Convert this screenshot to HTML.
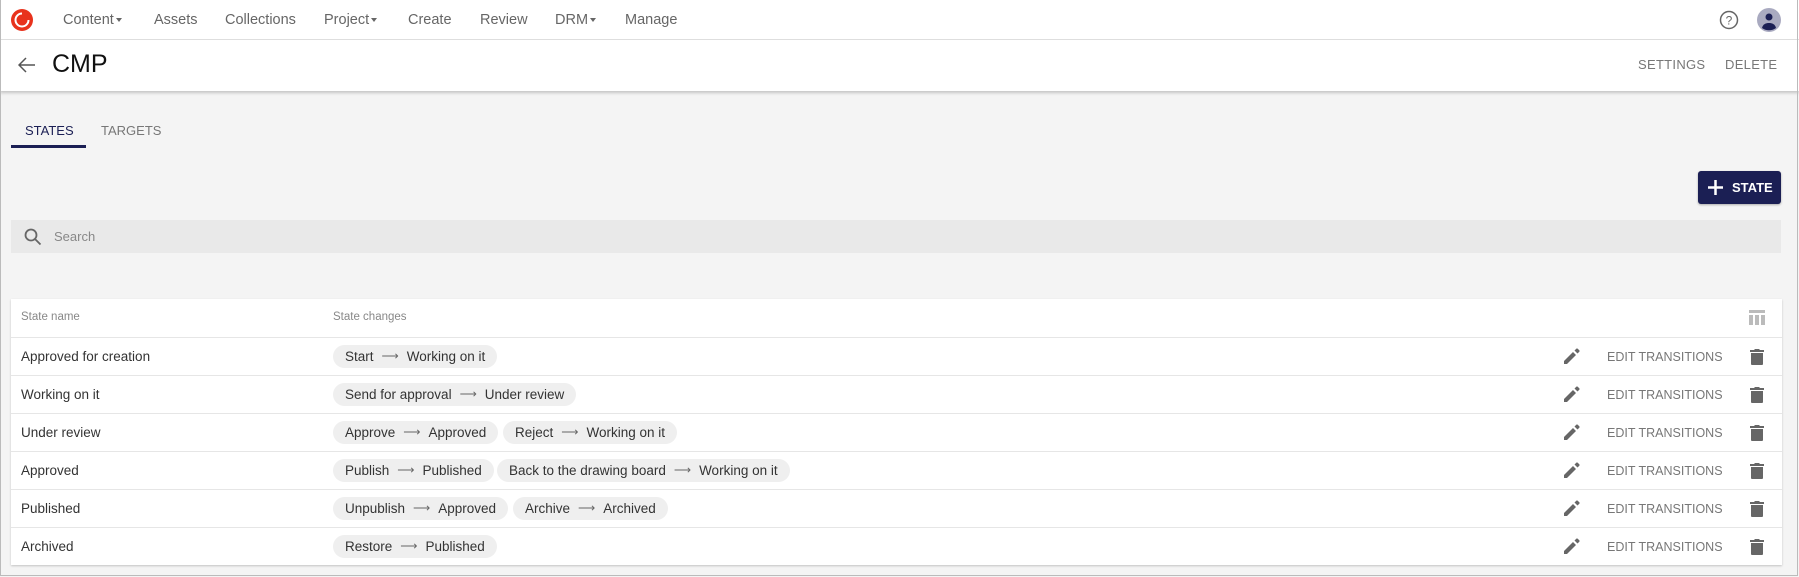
<!DOCTYPE html>
<html><head><meta charset="utf-8"><style>
*{box-sizing:border-box;margin:0;padding:0}
body{width:1799px;height:577px;overflow:hidden;background:#f4f4f4;font-family:"Liberation Sans",sans-serif;position:relative;color:#222}
.frame{position:absolute;left:0;top:0;width:1798px;height:576px;border:1px solid #bbb;border-top:none;pointer-events:none;z-index:9}
.nav{position:absolute;left:0;top:0;width:1799px;height:40px;background:#fff;border-bottom:1px solid #e0e0e0}
.nav span{position:absolute;top:12px;font-size:14.5px;color:#666}
.car{display:inline-block;border-left:3.5px solid transparent;border-right:3.5px solid transparent;border-top:4px solid #666;vertical-align:middle;margin-left:2px}
.hdr{position:absolute;left:0;top:40px;width:1799px;height:51px;background:#fff;box-shadow:0 2px 3px rgba(0,0,0,.2)}
.t{position:absolute;white-space:nowrap}
.tab{font-size:13px;color:#777;top:123px}
.btn{position:absolute;left:1698px;top:171px;width:83px;height:33px;background:#1b1f54;border-radius:3px;color:#fff;font-size:13px;font-weight:bold;box-shadow:0 1px 2px rgba(0,0,0,.3)}
.search{position:absolute;left:11px;top:220px;width:1770px;height:33px;background:#e9e9e9}
.card{position:absolute;left:11px;top:299px;width:1771px;height:266px;background:#fff;box-shadow:0 1px 2px rgba(0,0,0,.2)}
.row{position:absolute;left:0;width:1771px;height:38px;border-top:1px solid #e6e6e6}
.row .n{position:absolute;left:10px;top:11px;font-size:13.5px;color:#333}
.chip{position:absolute;top:7px;height:23px;line-height:23px;background:#efefef;border-radius:12px;padding:0 12px;font-size:13.5px;color:#333;white-space:nowrap}
.ar{color:#666;margin:0 8px;font-size:12px;position:relative;top:-1px}
.row .et{position:absolute;left:1596px;top:12px;font-size:12.5px;color:#777}
</style></head><body>
<div class="frame"></div>
<div class="nav">
<svg style="position:absolute;left:10px;top:8px" width="24" height="24" viewBox="0 0 24 24"><circle cx="12" cy="12" r="11" fill="#e8321c"/><circle cx="12" cy="12" r="6.5" fill="none" stroke="#fff" stroke-width="2"/><path d="M12 5.5a6.5 6.5 0 0 1 6.5 6.5" stroke="#e8321c" stroke-width="3" fill="none"/></svg>
<span style="left:63px">Content<i class="car"></i></span>
<span style="left:154px">Assets</span>
<span style="left:225px">Collections</span>
<span style="left:324px">Project<i class="car"></i></span>
<span style="left:408px">Create</span>
<span style="left:480px">Review</span>
<span style="left:555px">DRM<i class="car"></i></span>
<span style="left:625px">Manage</span>
<svg style="position:absolute;left:1719px;top:10px" width="20" height="20" viewBox="0 0 20 20"><circle cx="10" cy="10" r="8.5" fill="none" stroke="#666" stroke-width="1.5"/><text x="10" y="14.5" text-anchor="middle" font-size="12" font-family="Liberation Sans" fill="#666">?</text></svg>
<svg style="position:absolute;left:1757px;top:8px" width="24" height="24" viewBox="0 0 24 24"><circle cx="12" cy="12" r="12" fill="#a9aac0"/><circle cx="12" cy="9" r="3.5" fill="#1b1f54"/><path d="M5 20c1-4 4-5 7-5s6 1 7 5a12 12 0 0 1-14 0z" fill="#1b1f54"/></svg>
</div>
<div class="hdr">
<svg style="position:absolute;left:18px;top:17px" width="18" height="16" viewBox="0 0 18 16"><path d="M17 8H2M8 1L1 8l7 7" fill="none" stroke="#555" stroke-width="1.5"/></svg>
<div class="t" style="left:52px;top:10px;font-size:25px;color:#111">CMP</div>
<div class="t" style="left:1638px;top:17px;font-size:13px;color:#777;letter-spacing:.3px">SETTINGS</div>
<div class="t" style="left:1725px;top:17px;font-size:13px;color:#777;letter-spacing:.3px">DELETE</div>
</div>
<div class="t tab" style="left:25px;color:#1b1f54">STATES</div>
<div class="t tab" style="left:101px">TARGETS</div>
<div style="position:absolute;left:11px;top:145px;width:75px;height:3px;background:#1b1f54"></div>
<div class="btn"><svg style="position:absolute;left:10px;top:9px" width="15" height="15" viewBox="0 0 15 15"><path d="M7.5 0v15M0 7.5h15" stroke="#fff" stroke-width="2.5"/></svg><span style="position:absolute;left:34px;top:9px">STATE</span></div>
<div class="search"><svg style="position:absolute;left:13px;top:8px" width="18" height="18" viewBox="0 0 18 18"><circle cx="7" cy="7" r="5.5" fill="none" stroke="#666" stroke-width="1.8"/><path d="M11 11l5.5 5.5" stroke="#666" stroke-width="1.8"/></svg><span style="position:absolute;left:43px;top:9px;font-size:13px;color:#888">Search</span></div>
<div class="card">
<div class="t" style="left:10px;top:12px;font-size:11.5px;color:#888">State name</div>
<div class="t" style="left:322px;top:12px;font-size:11.5px;color:#888">State changes</div>
<svg style="position:absolute;left:1738px;top:11px" width="16" height="15" viewBox="0 0 16 15"><rect x="0" y="0" width="16" height="3" fill="#bbb"/><rect x="0" y="5" width="4" height="10" fill="#bbb"/><rect x="6" y="5" width="4" height="10" fill="#bbb"/><rect x="12" y="5" width="4" height="10" fill="#bbb"/></svg>
<div class="row" style="top:38px"><span class="n">Approved for creation</span><span class="chip" style="left:322px">Start<span class="ar">⟶</span>Working on it</span><span class="et">EDIT TRANSITIONS</span></div>
<div class="row" style="top:76px"><span class="n">Working on it</span><span class="chip" style="left:322px">Send for approval<span class="ar">⟶</span>Under review</span><span class="et">EDIT TRANSITIONS</span></div>
<div class="row" style="top:114px"><span class="n">Under review</span><span class="chip" style="left:322px">Approve<span class="ar">⟶</span>Approved</span><span class="chip" style="left:492px">Reject<span class="ar">⟶</span>Working on it</span><span class="et">EDIT TRANSITIONS</span></div>
<div class="row" style="top:152px"><span class="n">Approved</span><span class="chip" style="left:322px">Publish<span class="ar">⟶</span>Published</span><span class="chip" style="left:486px">Back to the drawing board<span class="ar">⟶</span>Working on it</span><span class="et">EDIT TRANSITIONS</span></div>
<div class="row" style="top:190px"><span class="n">Published</span><span class="chip" style="left:322px">Unpublish<span class="ar">⟶</span>Approved</span><span class="chip" style="left:502px">Archive<span class="ar">⟶</span>Archived</span><span class="et">EDIT TRANSITIONS</span></div>
<div class="row" style="top:228px"><span class="n">Archived</span><span class="chip" style="left:322px">Restore<span class="ar">⟶</span>Published</span><span class="et">EDIT TRANSITIONS</span></div>
</div>
<svg width="0" height="0" style="position:absolute"><defs>
<g id="pen"><path d="M1 14v3h3l9-9-3-3z M14.5 6.5l1.8-1.8a1 1 0 0 0 0-1.4l-1.6-1.6a1 1 0 0 0-1.4 0L11.5 3.5z" fill="#666"/></g>
<g id="bin"><path d="M1 2h4l1-1h4l1 1h4v2H1z M2 5h12v11a1 1 0 0 1-1 1H3a1 1 0 0 1-1-1z" fill="#666"/></g>
</defs></svg>
<div style="position:absolute;left:0;top:0">
<svg style="position:absolute;left:1563px;top:347px" width="18" height="18"><use href="#pen"/></svg><svg style="position:absolute;left:1749px;top:348px" width="16" height="18"><use href="#bin"/></svg>
<svg style="position:absolute;left:1563px;top:385px" width="18" height="18"><use href="#pen"/></svg><svg style="position:absolute;left:1749px;top:386px" width="16" height="18"><use href="#bin"/></svg>
<svg style="position:absolute;left:1563px;top:423px" width="18" height="18"><use href="#pen"/></svg><svg style="position:absolute;left:1749px;top:424px" width="16" height="18"><use href="#bin"/></svg>
<svg style="position:absolute;left:1563px;top:461px" width="18" height="18"><use href="#pen"/></svg><svg style="position:absolute;left:1749px;top:462px" width="16" height="18"><use href="#bin"/></svg>
<svg style="position:absolute;left:1563px;top:499px" width="18" height="18"><use href="#pen"/></svg><svg style="position:absolute;left:1749px;top:500px" width="16" height="18"><use href="#bin"/></svg>
<svg style="position:absolute;left:1563px;top:537px" width="18" height="18"><use href="#pen"/></svg><svg style="position:absolute;left:1749px;top:538px" width="16" height="18"><use href="#bin"/></svg>
</div>
</body></html>
